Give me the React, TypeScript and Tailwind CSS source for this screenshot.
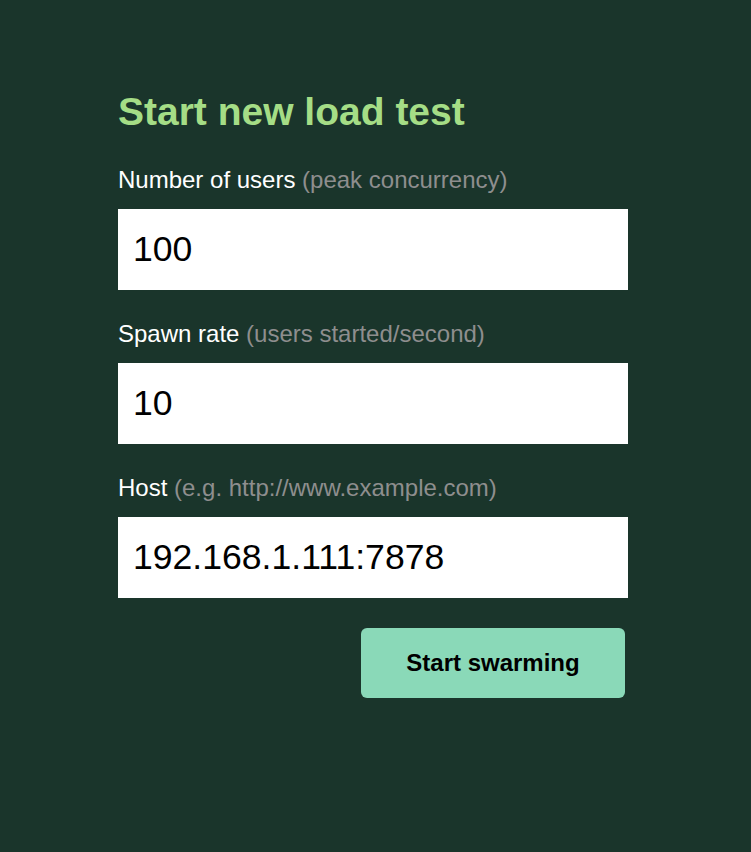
export default function App() {
  const fields = [
    { label: "Number of users", hint: "(peak concurrency)", value: "100" },
    { label: "Spawn rate", hint: "(users started/second)", value: "10" },
    { label: "Host", hint: "(e.g. http://www.example.com)", value: "192.168.1.111:7878" },
  ];
  return (
    <div
      className="min-h-screen w-full bg-[#1a352b]"
      style={{ fontFamily: '"Liberation Sans", Arial, sans-serif' }}
    >
      <div className="ml-[118px] w-[510px] pt-[89px] flex flex-col">
        <h1 className="text-[39px] leading-[45px] font-bold text-[#a5dd86]">Start new load test</h1>
        <div className="mt-[32px] flex flex-col gap-[30px]">
          {fields.map((f) => (
            <div key={f.label} className="flex flex-col gap-[15px]">
              <label className="text-[24px] leading-[28px] text-white">
                {f.label} <span className="text-[#8e8e8e]">{f.hint}</span>
              </label>
              <input
                readOnly
                value={f.value}
                className="h-[81px] w-full bg-white pl-[15px] text-[35.6px] text-black outline-none"
                style={{ fontFamily: '"Liberation Sans", Arial, sans-serif' }}
              />
            </div>
          ))}
        </div>
        <div className="mt-[30px] flex justify-end pr-[3px]">
          <button className="h-[70px] w-[264px] rounded-[6px] bg-[#8ad9b8] text-[24px] font-bold text-black">
            Start swarming
          </button>
        </div>
      </div>
    </div>
  );
}
